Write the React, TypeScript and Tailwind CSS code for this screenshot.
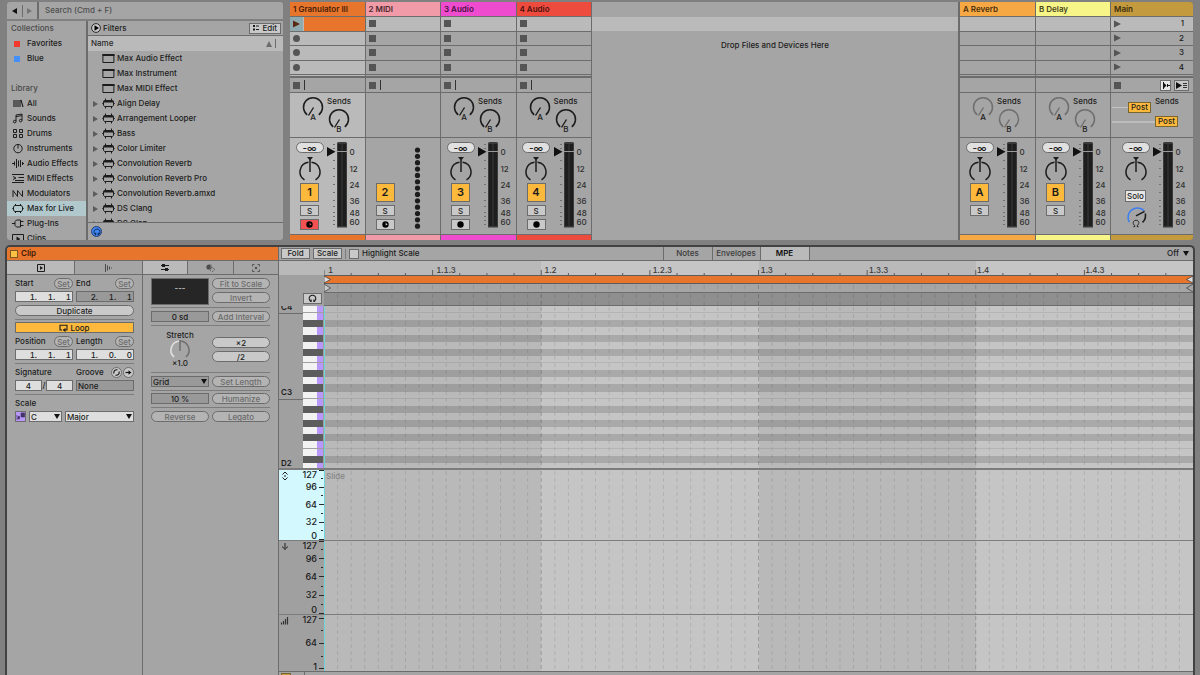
import React from "react";

type ChildrenProps = { children?: React.ReactNode };

const LINE = "border-[#6c6c6c]";

/* ---------- Browser ---------- */

function SideIcon({ name }: { name: string }) {
  const p = { fill: "none", stroke: "#1c1c1c", strokeWidth: 1 };
  return (
    <svg width="12" height="11" viewBox="0 0 12 11" className="shrink-0" aria-hidden="true">
      {name === "All" && <path {...p} strokeWidth={1.1} d="M2 2v7M4 2v7M6 2v7M8 2v7M9 2l2 7" />}
      {name === "Sounds" && (
        <g {...p}>
          <path d="M4 8.4V2l6-1v6.4M4 3.6l6-1" />
          <circle cx="2.7" cy="8.6" r="1.3" />
          <circle cx="8.7" cy="7.6" r="1.3" />
        </g>
      )}
      {name === "Drums" && <path {...p} d="M1.500 1.500h3v3h-3zM7.500 1.500h3v3h-3zM1.500 6.500h3v3h-3zM7.500 6.500h3v3h-3z" />}
      {name === "Instruments" && (
        <g {...p}>
          <circle cx="6" cy="5.6" r="4.2" />
          <path d="M6 1.4v4.2" />
        </g>
      )}
      {name === "Audio Effects" && <path {...p} d="M0 5.500h2M2.500 3.500v4M4.500 1v9M6.500 2.500v6M8.500 2v7M10.500 4v3M10.500 5.500H12" />}
      {name === "MIDI Effects" && <path {...p} d="M0 1.500h12M6.500 4.500H12M1 3.500l3 1.500-3 1.500M3 7.500h9M0 9.500h12" />}
      {name === "Modulators" && <path {...p} d="M1 9V2.500L5.500 8.500V2.500L10.500 8.500V2.500" />}
      {name === "Max for Live" && (
        <path {...p} d="M2.500 2.500h7l1 1.500v3l-1 1.500h-7l-1-1.500v-3zM3.500 1v1.500M8.500 1v1.500M3.500 8.500V10M8.500 8.500V10M.3 5.500h1.200M10.500 5.500h1.200" />
      )}
      {name === "Plug-Ins" && <path {...p} d="M0 5.500h3M3 3.500l1.500-1.500h4v7h-4L3 7.500zM8.500 3.500H11.500M8.500 7.500H11.500" />}
      {name === "Clips" && (
        <g>
          <path {...p} d="M.5 1.500h11v9H.5z" />
          <path d="M4.500 3.500v5l4-2.500z" fill="#1c1c1c" />
        </g>
      )}
    </svg>
  );
}

const libraryItems = [
  "All",
  "Sounds",
  "Drums",
  "Instruments",
  "Audio Effects",
  "MIDI Effects",
  "Modulators",
  "Max for Live",
  "Plug-Ins",
  "Clips",
];

const browserItems: { name: string; device: boolean }[] = [
  { name: "Max Audio Effect", device: false },
  { name: "Max Instrument", device: false },
  { name: "Max MIDI Effect", device: false },
  { name: "Align Delay", device: true },
  { name: "Arrangement Looper", device: true },
  { name: "Bass", device: true },
  { name: "Color Limiter", device: true },
  { name: "Convolution Reverb", device: true },
  { name: "Convolution Reverb Pro", device: true },
  { name: "Convolution Reverb.amxd", device: true },
  { name: "DS Clang", device: true },
  { name: "DS Clap", device: true },
];

function ItemIcon({ device }: { device: boolean }) {
  return (
    <svg width="13" height="11" viewBox="0 0 13 11" className="shrink-0" aria-hidden="true">
      {device ? (
        <g>
          <path d="M2.500 2.500h8l1 1.200v3.600l-1 1.200h-8l-1-1.200v-3.600zM3.500 .5v2M9.500 .5v2M3.500 8.500v2M9.500 8.500v2M.3 5.500h1.200M11.500 5.500h1.200" fill="none" stroke="#1c1c1c" />
          <path d="M1.500 2.500h10V4.500h-10z" fill="#1c1c1c" />
        </g>
      ) : (
        <g>
          <path d="M.9 1.500h11v8h-11z" fill="none" stroke="#1c1c1c" />
          <path d="M.5 1h12v2H.5z" fill="#1c1c1c" />
        </g>
      )}
    </svg>
  );
}

function HeadphoneIcon({ color, size }: { color: string; size: number }) {
  return (
    <svg width={size} height={size} viewBox="0 0 10 10" aria-hidden="true">
      <path d="M3.200 8.300A3.700 3.700 0 1 1 6.800 8.300" fill="none" stroke={color} strokeWidth="1.200" />
      <path d="M2.600 6h1.500v3H2.600zM5.900 6h1.500v3H5.900z" fill={color} />
    </svg>
  );
}

function Browser() {
  return (
    <section className="flex w-[276px] shrink-0 flex-col gap-[2px]">
      <div className="flex h-[17px] shrink-0 rounded-t-[3px] bg-[#a5a5a5]">
        <div className={`flex w-8 items-center border-r-2 ${LINE}`}>
          <button aria-label="Back" className={`flex h-3 flex-1 items-center justify-center border-r ${LINE}`}>
            <svg width="5" height="6" viewBox="0 0 5 6"><path d="M5 0v6L0 3z" fill="#111" /></svg>
          </button>
          <button aria-label="Forward" className="flex flex-1 items-center justify-center">
            <svg width="5" height="6" viewBox="0 0 5 6"><path d="M0 0v6l5-3z" fill="#767676" /></svg>
          </button>
        </div>
        <input
          aria-label="Search"
          placeholder="Search (Cmd + F)"
          className="min-w-0 flex-1 bg-transparent px-[6px] outline-none placeholder:text-[#4f4f4f]"
        />
      </div>
      <div className="flex min-h-0 flex-1 overflow-hidden rounded-b-[3px] bg-[#a5a5a5]">
        <nav className={`w-[81px] shrink-0 overflow-hidden border-r-2 ${LINE}`}>
          <h2 className="flex h-[15px] items-center pl-1 text-[#4a4a4a]">Collections</h2>
          <a href="#favorites" className="flex h-[15px] items-center gap-[7px] pl-[7px]">
            <span className="size-[6px] bg-[#f2372c]" />Favorites
          </a>
          <a href="#blue" className="flex h-[15px] items-center gap-[7px] pl-[7px]">
            <span className="size-[6px] bg-[#4590f8]" />Blue
          </a>
          <h2 className="mt-[15px] flex h-[15px] items-center pl-1 text-[#4a4a4a]">Library</h2>
          {libraryItems.map((n) => (
            <a
              key={n}
              href="#library"
              className={`flex h-[15px] items-center gap-[3px] pl-[5px] whitespace-nowrap ${n === "Max for Live" ? "bg-[#b1c8cc]" : ""}`}
            >
              <SideIcon name={n} />
              {n}
            </a>
          ))}
        </nav>
        <div className="flex min-w-0 flex-1 flex-col">
          <div className={`flex h-[15px] shrink-0 items-center border-b pr-[2px] pl-[3px] ${LINE}`}>
            <button className="flex items-center gap-[2px]">
              <svg width="10" height="10" viewBox="0 0 10 10" aria-hidden="true">
                <circle cx="5" cy="5" r="4.400" fill="#c9c9c9" stroke="#1c1c1c" strokeWidth=".9" />
                <path d="M3.500 2.200v5.600L8 5z" fill="#000" />
              </svg>
              Filters
            </button>
            <button className={`ml-auto flex h-[11px] items-center gap-[3px] border bg-[#c9c9c9] px-[3px] leading-none ${LINE}`}>
              <svg width="6" height="6" viewBox="0 0 6 6" aria-hidden="true">
                <path d="M0 0h2v2H0zM3 .5h3v1H3zM0 3.500h2v2H0zM3 4h3v1H3z" fill="#1c1c1c" />
              </svg>
              Edit
            </button>
          </div>
          <div className="flex h-[15px] shrink-0 items-center bg-[#bababa] pr-[7px] pl-[3px] text-[#2a2a2a]">
            Name
            <svg width="6" height="6" viewBox="0 0 6 6" className="ml-auto"><path d="M0 6h6L3 0z" fill="#6c6c6c" /></svg>
            <span className="ml-[3px] h-[9px] w-px bg-[#6c6c6c]" />
          </div>
          <ul className="min-h-0 flex-1 overflow-hidden">
            {browserItems.map((it) => (
              <li key={it.name} className="flex h-[15px] items-center pl-[5px] whitespace-nowrap">
                <svg width="5" height="6" viewBox="0 0 5 6" className="mr-[4px] shrink-0">
                  {it.device && <path d="M0 0v6l5-3z" fill="#5c5c5c" />}
                </svg>
                <ItemIcon device={it.device} />
                <span className="ml-[2px]">{it.name}</span>
              </li>
            ))}
          </ul>
          <div className={`flex h-[18px] shrink-0 items-center border-t pl-[3px] ${LINE}`}>
            <button aria-label="Preview" className="flex size-[11px] items-center justify-center rounded-full border border-[#2b3e66] bg-[#3d86f6]">
              <HeadphoneIcon color="#14284d" size={8} />
            </button>
          </div>
        </div>
      </div>
    </section>
  );
}

/* ---------- Session mixer ---------- */

type Kind = "clip" | "midi" | "audio" | "return" | "main";

type Track = {
  title: string;
  label: string;
  kind: Kind;
  head: string;
  text: string;
};

const tracks: Track[] = [
  { title: "1 Granulator III", label: "1", kind: "clip", head: "bg-[#e8752c]", text: "text-[#4a2108]" },
  { title: "2 MIDI", label: "2", kind: "midi", head: "bg-[#f29ba8]", text: "text-[#4c2a30]" },
  { title: "3 Audio", label: "3", kind: "audio", head: "bg-[#ee4bcf]", text: "text-[#4b1240]" },
  { title: "4 Audio", label: "4", kind: "audio", head: "bg-[#ee4b3f]", text: "text-[#4b120e]" },
];

const returns: Track[] = [
  { title: "A Reverb", label: "A", kind: "return", head: "bg-[#f6a845]", text: "text-[#4b300c]" },
  { title: "B Delay", label: "B", kind: "return", head: "bg-[#f7f488]", text: "text-[#474620]" },
];

const mainTrack: Track = { title: "Main", label: "", kind: "main", head: "bg-[#c49a3e]", text: "text-[#3e2f0c]" };

function SendKnob({ letter, dim }: { letter: string; dim: boolean }) {
  const c = dim ? "#6f6f6f" : "#1c1c1c";
  return (
    <svg width="24" height="26" viewBox="0 0 24 26" aria-hidden="true">
      <path d="M6.200 19.800A9.500 9.500 0 1 1 17.800 19.800" fill="none" stroke={c} strokeWidth="1.500" />
      <path d="M12.500 12.500L7.500 20.500" stroke={c} strokeWidth="1.400" />
      <text x="12" y="25" textAnchor="middle" fontSize="8" fontWeight="500" fill="#1c1c1c">{letter}</text>
    </svg>
  );
}

function Sends({ kind }: { kind: Kind }) {
  if (kind === "midi") return null;
  if (kind === "main") {
    return (
      <div className="flex flex-col gap-[3px] pt-[3px] pl-px">
        <div className="flex items-end">
          <span className="mb-[5px] h-px w-4 bg-[#c2c2c2]" />
          <button className="h-[11px] border border-[#7a6530] bg-[#fcb93b] px-[2px] leading-[9px]">Post</button>
          <span className="ml-1 self-start pb-[6px] leading-[11px]">Sends</span>
        </div>
        <div className="flex items-center">
          <span className="h-[2px] w-[43px] bg-[#bcbcbc]" />
          <button className="h-[11px] border border-[#7a6530] bg-[#fcb93b] px-[2px] leading-[9px]">Post</button>
        </div>
      </div>
    );
  }
  const dim = kind === "return";
  return (
    <div className="flex pl-[11px]">
      <div className="pt-[2px]"><SendKnob letter="A" dim={dim} /></div>
      <div className="flex flex-col pt-[3px] pl-[2px]">
        <span className="text-right leading-[11px]">Sends</span>
        <SendKnob letter="B" dim={dim} />
      </div>
    </div>
  );
}

function PanKnob() {
  return (
    <svg width="24" height="26" viewBox="0 0 24 26" aria-hidden="true">
      <path d="M9 0h6l-3 3.800z" fill="#1c1c1c" />
      <path d="M6.500 22.800A9.500 9.500 0 0 1 10.500 5.300M17.500 22.800A9.500 9.500 0 0 0 13.500 5.300" fill="none" stroke="#1c1c1c" strokeWidth="1.500" />
      <path d="M12 3v12" stroke="#1c1c1c" strokeWidth="1.500" />
    </svg>
  );
}

const meterMarks: [string, number][] = [
  ["0", 10],
  ["12", 27],
  ["24", 43],
  ["36", 59],
  ["48", 71],
  ["60", 80],
];

function Meter() {
  return (
    <svg width="35" height="88" viewBox="1 0 35 88" aria-hidden="true">
      {[2, 6, 18, 26, 34, 42, 50, 58, 64, 70, 74, 78, 82].map((y) => (
        <path key={y} d={`M7 ${y + 0.5}h2`} stroke="#707070" />
      ))}
      <path d="M11 1.500q0-1.500 1.500-1.500h7q1.500 0 1.500 1.500v84h-10z" fill="#3b3b3b" />
      <path d="M12 2h3.500v82H12zM16.500 2H20v82h-3.500z" fill="#1e1e1e" />
      <path d="M10.500 9.500h11" stroke="#9a9a9a" />
      <path d="M1 5l8.500 4.700L1 14.500z" fill="#111" />
      {meterMarks.map(([t, y]) => (
        <text key={t} x="23.500" y={y + 2.500} fontSize="8" fill="#303030">{t}</text>
      ))}
    </svg>
  );
}

function MidiDots() {
  return (
    <svg width="35" height="88" viewBox="0 0 35 88" aria-hidden="true">
      {Array.from({ length: 13 }, (_, i) => (
        <circle key={i} cx="14.500" cy={8 + i * 6.350} r="2.600" fill="#1c1c1c" />
      ))}
    </svg>
  );
}

function Strip({ t }: { t: Track }) {
  const midi = t.kind === "midi";
  const main = t.kind === "main";
  return (
    <div className={`flex pt-[4px] ${main ? "pl-[7px]" : "pl-[2px]"}`}>
      <div className="flex w-[35px] shrink-0 flex-col items-center">
        <div className="flex h-[41px] flex-col items-center gap-[4px]">
          {!midi && (
            <>
              <button aria-label="Volume" className={`flex h-[11px] w-[28px] items-center justify-center rounded-full border bg-[#e0e0e0] text-[10px] leading-none ${LINE}`}>
                -∞
              </button>
              <PanKnob />
            </>
          )}
        </div>
        {main ? (
          <div className="mt-[7px] flex flex-col items-center gap-[2px]">
            <button className={`h-[12px] border bg-[#e6e6e6] px-px leading-[10px] ${LINE}`}>Solo</button>
            <svg width="24" height="26" viewBox="0 0 24 26" aria-hidden="true">
              <path d="M5.300 18.200A9.500 9.500 0 0 1 20.200 6.700" fill="none" stroke="#3d7ff0" strokeWidth="1.600" />
              <path d="M21.300 9.500A9.500 9.500 0 0 1 18.500 18.400" fill="none" stroke="#1c1c1c" strokeWidth="1.600" />
              <path d="M12 11.800L20.600 7.300" stroke="#1c1c1c" strokeWidth="1.500" />
              <path d="M9.300 22.700h1.500v-1.200A2.800 2.800 0 1 1 13.200 21.500v1.200h1.500" fill="none" stroke="#1c1c1c" strokeWidth=".9" />
            </svg>
          </div>
        ) : (
          <div className="flex flex-col gap-[3px]">
            <button className={`flex h-[19px] w-[19px] items-center justify-center border bg-[#fcb93b] text-[11px] font-semibold ${LINE}`}>
              {t.label}
            </button>
            <button className={`flex h-[11px] w-[19px] items-center justify-center border bg-[#c9c9c9] leading-none ${LINE}`}>S</button>
            {t.kind !== "return" && (
              <button
                aria-label="Arm"
                className={`flex h-[11px] w-[19px] items-center justify-center border ${LINE} ${t.kind === "clip" ? "bg-[#f25252]" : "bg-[#c9c9c9]"}`}
              >
                <svg width="7" height="7" viewBox="0 0 7 7">
                  <circle cx="3.500" cy="3.500" r="3.200" fill="#000" />
                  {t.kind === "clip" && <path d="M3.700 1.200Q4 2.700 5.700 3.200L3.700 4.500z" fill="#f25252" />}
                  {t.kind === "midi" && <path d="M3.700 1.200Q4 2.700 5.700 3.200L3.700 4.500z" fill="#e0e0e0" />}
                </svg>
              </button>
            )}
          </div>
        )}
      </div>
      {midi ? <MidiDots /> : <Meter />}
    </div>
  );
}

function Slot({ t, index }: { t: Track; index: number }) {
  const lit = index === 0 || t.kind === "clip";
  const bg = lit ? "bg-[#bababa]" : "bg-[#a5a5a5]";
  if (t.kind === "clip" && index === 0) {
    return (
      <div className="flex bg-[#e8752c]">
        <button aria-label="Launch clip" className="flex w-[14px] items-center border-r border-[#bababa] bg-[#8fabb0] pl-[3px]">
          <svg width="7" height="8" viewBox="0 0 7 8"><path d="M0 .5v7L7 4z" fill="#5b2a12" /></svg>
        </button>
      </div>
    );
  }
  return (
    <div className={`flex items-center pl-[3px] ${bg}`}>
      {t.kind === "clip" && <span className="size-[7px] rounded-full bg-[#555]" />}
      {(t.kind === "midi" || t.kind === "audio") && <span className="size-[7px] bg-[#555]" />}
      {t.kind === "main" && (
        <>
          <svg width="7" height="8" viewBox="0 0 7 8"><path d="M0 .5v7L7 4z" fill="#555" /></svg>
          <span className="ml-auto pr-[9px]">{index + 1}</span>
        </>
      )}
    </div>
  );
}

function TrackColumn({ t }: { t: Track }) {
  const body = t.kind === "clip" ? "bg-[#bababa]" : "bg-[#a5a5a5]";
  const round = t.kind === "main";
  return (
    <div className="flex min-w-0 flex-col overflow-hidden">
      <h3 className={`flex h-[14px] items-center pl-[3px] font-semibold whitespace-nowrap ${t.head} ${t.text} ${round ? "rounded-tr-[3px]" : ""}`}>
        {t.title}
      </h3>
      <div className="mt-px grid h-[57px] grid-rows-4 gap-px">
        {[0, 1, 2, 3].map((i) => (
          <Slot key={i} t={t} index={i} />
        ))}
      </div>
      <div className={`mt-px h-px ${body}`} />
      <div className="mt-[2px] flex h-[14px] items-center bg-[#a5a5a5] pl-[3px]">
        {t.kind !== "return" && <button aria-label="Stop" className="size-[7px] bg-[#555]" />}
        {(t.kind === "clip" || t.kind === "midi" || t.kind === "audio") && <span className="ml-[4px] h-[10px] w-px bg-[#333]" />}
        {t.kind === "main" && (
          <div className="mr-[4px] ml-auto flex gap-[3px]">
            <button aria-label="Back to arrangement" className={`flex h-[11px] w-[11px] items-center justify-center border bg-[#e6e6e6] ${LINE}`}>
              <svg width="8" height="7" viewBox="0 0 8 7"><path d="M1.500 0v7M5.500 2v3M5.500 3.500h2.500" stroke="#111" fill="none" /><path d="M2 1l2.500 2.500L2 6z" fill="#111" /></svg>
            </button>
            <button aria-label="Follow actions" className={`flex h-[11px] w-[15px] items-center justify-center border bg-[#c9c9c9] ${LINE}`}>
              <svg width="12" height="7" viewBox="0 0 12 7"><path d="M0 0v7l6-3.500z" fill="#111" /><path d="M7 1.500h4M7 3.500h4M7 5.500h4" stroke="#333" /></svg>
            </button>
          </div>
        )}
      </div>
      <div className={`mt-px h-[44px] ${body}`}><Sends kind={t.kind} /></div>
      <div className={`mt-px min-h-0 flex-1 overflow-hidden ${body}`}><Strip t={t} /></div>
      <div className={`mt-px h-[5px] shrink-0 ${t.head} ${round ? "rounded-br-[3px]" : ""}`} />
    </div>
  );
}

function Session() {
  return (
    <section className="flex min-w-0 flex-1">
      <div className="grid w-[301px] shrink-0 grid-cols-4 gap-px bg-[#6c6c6c]">
        {tracks.map((t) => <TrackColumn key={t.title} t={t} />)}
      </div>
      <div className={`flex min-w-0 flex-1 flex-col border-x bg-[#a5a5a5] ${LINE}`}>
        <div className="mt-[15px] h-[14px] bg-[#bababa]" />
        <p className="pt-[8px] text-center leading-[13px]">Drop Files and Devices Here</p>
      </div>
      <div className="grid w-[234px] shrink-0 grid-cols-[75px_74px_1fr] gap-px rounded-r-[3px] bg-[#6c6c6c] pl-px">
        {[...returns, mainTrack].map((t) => <TrackColumn key={t.title} t={t} />)}
      </div>
    </section>
  );
}

/* ---------- Clip panel ---------- */

function Pill({ children, dim }: ChildrenProps & { dim?: boolean }) {
  return (
    <button className={`flex h-[11px] w-full items-center justify-center rounded-full border leading-none whitespace-nowrap ${LINE} ${dim ? "bg-[#b4b4b4] text-[#6b6b6b]" : "bg-[#c9c9c9]"}`}>
      {children}
    </button>
  );
}

function Labelled({ id, children }: ChildrenProps & { id: string }) {
  return (
    <div className="flex items-center justify-between">
      <label htmlFor={id}>{children}</label>
      <div className="w-[19px]"><Pill dim>Set</Pill></div>
    </div>
  );
}

function Field({ id, value, dark, center, label }: { id: string; value: string; dark?: boolean; center?: boolean; label?: string }) {
  return (
    <input
      id={id}
      aria-label={label}
      defaultValue={value}
      className={`h-[11px] w-full min-w-0 border px-px leading-none outline-none ${LINE} ${dark ? "bg-[#999]" : "bg-[#dedede]"} ${center ? "text-center" : "text-right tabular-nums"}`}
    />
  );
}

function Drop({ label, options, dark }: { label: string; options: string[]; dark?: boolean }) {
  return (
    <div className="relative w-full">
      <select aria-label={label} className={`block h-[11px] w-full appearance-none border px-px leading-none ${LINE} ${dark ? "bg-[#999]" : "bg-[#dedede]"}`}>
        {options.map((o) => <option key={o}>{o}</option>)}
      </select>
      <svg width="6" height="5" viewBox="0 0 6 5" className="pointer-events-none absolute top-[3px] right-[2px]">
        <path d="M0 0h6L3 5z" fill="#111" />
      </svg>
    </div>
  );
}

function Rule() {
  return <div className="h-px bg-[#7c7c7c]" />;
}

function ClipTabs() {
  const s = { fill: "none", stroke: "#1c1c1c" };
  return (
    <div className={`flex h-[14px] shrink-0 border-b ${LINE}`}>
      <button aria-label="Clip" className={`flex w-[68px] items-center justify-center border-r bg-[#bababa] ${LINE}`}>
        <svg width="8" height="8" viewBox="0 0 8 8"><path {...s} d="M.5 .5h7v7h-7z" /><path d="M3 2v4l3-2z" fill="#1c1c1c" /></svg>
      </button>
      <button aria-label="Launch" className={`flex w-[68px] items-center justify-center border-r ${LINE}`}>
        <svg width="8" height="8" viewBox="0 0 8 8"><path d="M.5 0v8M2.500 1.500v5M4.500 2.500v3M6.500 3.500v1" stroke="#4c4c4c" /></svg>
      </button>
      <button aria-label="Notes" className={`flex flex-1 items-center justify-center border-r bg-[#bababa] ${LINE}`}>
        <svg width="8" height="7" viewBox="0 0 8 7"><path d="M0 1.500h8M0 5.500h8" stroke="#1c1c1c" /><path d="M1 0h3v3H1zM4 4h3v3H4z" fill="#1c1c1c" /></svg>
      </button>
      <button aria-label="Transform" className={`flex flex-1 items-center justify-center border-r ${LINE}`}>
        <svg width="9" height="8" viewBox="0 0 9 8"><circle cx="3" cy="3" r="2.600" fill="#4c4c4c" /><path d="M5 0v5" stroke="#808080" /><circle cx="6.200" cy="5.500" r="2" fill="none" stroke="#4c4c4c" strokeDasharray="1 1" /></svg>
      </button>
      <button aria-label="Generate" className="flex flex-1 items-center justify-center">
        <svg width="8" height="8" viewBox="0 0 8 8"><path d="M.5 2.500v-2h2M5.500 .5h2v2M7.500 5.500v2h-2M2.500 7.500h-2v-2" fill="none" stroke="#555" /><circle cx="4" cy="4" r="1.300" fill="#555" /></svg>
      </button>
    </div>
  );
}

function ClipPanel() {
  return (
    <aside className={`flex w-[272px] shrink-0 flex-col border-r ${LINE}`}>
      <h2 className={`flex h-[14px] shrink-0 items-center gap-[3px] rounded-tl-[3px] border-b bg-[#e8752c] pl-[3px] font-semibold text-[#3c1b06] ${LINE}`}>
        <span className="size-[8px] border border-[#7a5a20] bg-[#fcc044]" />
        Clip
      </h2>
      <ClipTabs />
      <div className="flex min-h-0 flex-1">
        <div className={`flex w-[136px] shrink-0 flex-col border-r pt-[3px] pr-2 pl-2 ${LINE}`}>
          <div className="grid grid-cols-2 gap-x-[3px] gap-y-[2px]">
            <Labelled id="start">Start</Labelled>
            <Labelled id="end">End</Labelled>
            <Field id="start" value="1.     1.     1" />
            <Field id="end" value="2.     1.     1" dark />
          </div>
          <div className="mt-[3px] mb-[3px]"><Pill>Duplicate</Pill></div>
          <Rule />
          <button className={`mt-[2px] flex h-[11px] items-center justify-center gap-[2px] border bg-[#fcb93b] leading-none ${LINE}`}>
            <svg width="9" height="8" viewBox="0 0 9 8" aria-hidden="true">
              <path d="M3 6H1V1.200h7V6H6" fill="none" stroke="#1c1c1c" strokeWidth="1.100" />
              <path d="M6.500 4v4L3.500 6z" fill="#1c1c1c" />
            </svg>
            Loop
          </button>
          <div className="mt-[3px] mb-[3px] grid grid-cols-2 gap-x-[3px] gap-y-[2px]">
            <Labelled id="position">Position</Labelled>
            <Labelled id="length">Length</Labelled>
            <Field id="position" value="1.     1.     1" />
            <Field id="length" value="1.     0.     0" />
          </div>
          <Rule />
          <div className="mt-[3px] mb-[3px] grid grid-cols-2 gap-x-[3px] gap-y-[2px]">
            <span>Signature</span>
            <div className="flex items-center gap-px">
              <label htmlFor="groove" className="mr-auto">Groove</label>
              <button aria-label="Hot-swap groove" className={`flex size-[11px] items-center justify-center rounded-full border bg-[#c9c9c9] ${LINE}`}>
                <svg width="7" height="7" viewBox="0 0 7 7"><path d="M1 4.500A2.700 2.700 0 0 1 4.500 1M6 2.500A2.700 2.700 0 0 1 2.500 6" fill="none" stroke="#111" strokeWidth="1.100" /></svg>
              </button>
              <button aria-label="Commit groove" className={`flex size-[11px] items-center justify-center rounded-full border bg-[#c9c9c9] ${LINE}`}>
                <svg width="7" height="7" viewBox="0 0 7 7"><path d="M.5 3.500h4" stroke="#111" strokeWidth="1.200" /><path d="M3.500 1.300v4.400l3-2.200z" fill="#111" /></svg>
              </button>
            </div>
            <div className="flex items-center gap-px">
              <Field id="num" label="Numerator" value="4" center />/
              <Field id="den" label="Denominator" value="4" center />
            </div>
            <input id="groove" defaultValue="None" className={`h-[11px] w-full border bg-[#999] px-px leading-none outline-none ${LINE}`} />
          </div>
          <Rule />
          <span className="mt-[3px]">Scale</span>
          <div className="mt-[2px] flex gap-[3px]">
            <button aria-label="Scale mode" className={`flex size-[11px] shrink-0 items-center justify-center border bg-[#b898fb] ${LINE}`}>
              <svg width="9" height="9" viewBox="0 0 9 9"><path d="M1 3v5M2 4.500h1.500V7H2zM5 1h3.500v4H5z" fill="#453569" stroke="#453569" strokeWidth=".7" /></svg>
            </button>
            <div className="w-[33px] shrink-0"><Drop label="Root note" options={["C", "D", "E"]} /></div>
            <Drop label="Scale name" options={["Major", "Minor"]} />
          </div>
        </div>
        <div className="flex min-w-0 flex-1 flex-col pt-[3px] pr-2 pl-2">
          <div className="grid grid-cols-2 gap-x-[3px]">
            <div className={`flex h-[27px] items-center justify-center border bg-[#262626] pb-[6px] text-[#d0d0d0] ${LINE}`}>---</div>
            <div className="flex flex-col gap-[3px]"><Pill dim>Fit to Scale</Pill><Pill dim>Invert</Pill></div>
          </div>
          <div className="mt-[2px] mb-[3px]"><Rule /></div>
          <div className="grid grid-cols-2 gap-x-[3px]">
            <Field id="interval" label="Interval" value="0 sd" dark center />
            <Pill dim>Add Interval</Pill>
          </div>
          <div className="mt-[3px] mb-[4px]"><Rule /></div>
          <div className="grid grid-cols-2 items-center gap-x-[3px]">
            <div className="flex flex-col items-center">
              Stretch
              <svg width="22" height="17" viewBox="0 0 22 17" aria-hidden="true" className="overflow-visible">
                <path d="M5 16A9.200 9.200 0 0 1 11 0" fill="none" stroke="#dedede" strokeWidth="1.700" />
                <path d="M11 0A9.200 9.200 0 0 1 17 16" fill="none" stroke="#6f6f6f" strokeWidth="1.500" />
                <path d="M11 -1v11" stroke="#6f6f6f" strokeWidth="1.500" />
              </svg>
              ×1.0
            </div>
            <div className="flex flex-col gap-[3px]"><Pill>×2</Pill><Pill>/2</Pill></div>
          </div>
          <div className="mt-[3px] mb-[3px]"><Rule /></div>
          <div className="grid grid-cols-2 gap-x-[3px]">
            <Drop label="Stretch grid" options={["Grid"]} dark />
            <Pill dim>Set Length</Pill>
          </div>
          <div className="mt-[3px] mb-[2px]"><Rule /></div>
          <div className="grid grid-cols-2 gap-x-[3px]">
            <Field id="humanize" label="Humanize amount" value="10 %" dark center />
            <Pill dim>Humanize</Pill>
          </div>
          <div className="mt-[3px] mb-[3px]"><Rule /></div>
          <div className="grid grid-cols-2 gap-x-[3px]"><Pill dim>Reverse</Pill><Pill dim>Legato</Pill></div>
        </div>
      </div>
    </aside>
  );
}

/* ---------- Note editor ---------- */

const keyNames = ["C", "B", "A#", "A", "G#", "G", "F#", "F", "E", "D#", "D", "C#"];
const keys = Array.from({ length: 23 }, (_, i) => keyNames[i % 12]);

function BeatShade() {
  return (
    <div className="absolute inset-0 grid grid-cols-4">
      <div className="bg-[#b9b9b9]" />
      <div className="bg-[#c5c5c5]" />
      <div className="bg-[#b9b9b9]" />
      <div className="bg-[#c5c5c5]" />
    </div>
  );
}

function GridLines() {
  return (
    <svg width="100%" height="100%" className="pointer-events-none absolute inset-0" aria-hidden="true">
      {Array.from({ length: 63 }, (_, i) => {
        const x = `${((i + 1) * 100) / 64}%`;
        return (
          <line key={i} x1={x} x2={x} y1="1" y2="100%" stroke="#000" strokeOpacity={(i + 1) % 16 === 0 ? 0.2 : 0.1} strokeDasharray="4 3" />
        );
      })}
    </svg>
  );
}

function Row({ left, children, size, leftBg }: ChildrenProps & { left?: React.ReactNode; size: string; leftBg: string }) {
  return (
    <div className={`flex shrink-0 ${size}`}>
      <div className={`w-[45px] shrink-0 overflow-hidden ${leftBg}`}>{left}</div>
      <div className="relative min-w-0 flex-1 overflow-hidden">{children}</div>
    </div>
  );
}

type AxisMark = [string, number, number];

function Lane({ marks, minor, size, height, active, icon, title }: {
  marks: AxisMark[];
  minor: number[];
  size: string;
  height: number;
  active?: boolean;
  icon: React.ReactNode;
  title?: string;
}) {
  return (
    <Row
      size={size}
      leftBg={active ? "bg-[#d3f8fe]" : "bg-[#a0a0a0]"}
      left={
        <svg width="45" height={height} viewBox={`0 0 45 ${height}`}>
          {icon}
          {marks.map(([t, ty, y]) => (
            <g key={t}>
              <text x="38" y={ty + 3} textAnchor="end" fontSize="9" fontWeight="500" fill="#1c1c1c">{t}</text>
              <path d={`M40 ${y}h5`} stroke="#2a2a2a" />
            </g>
          ))}
          {minor.map((y) => <path key={y} d={`M42 ${y}h2`} stroke="#2a2a2a" />)}
        </svg>
      }
    >
      <BeatShade />
      <GridLines />
      <div className="absolute inset-y-0 left-0 w-px bg-[#6fd3da]" />
      {title && <span className="relative block pl-[2px] leading-[12px] text-[#858585]">{title}</span>}
    </Row>
  );
}

function Editor() {
  return (
    <main className="flex min-w-0 flex-1 flex-col">
      <div className={`grid h-[14px] shrink-0 grid-cols-[1fr_auto_1fr] border-b ${LINE}`}>
        <div className="flex items-center pl-[2px]">
          <button className={`h-[11px] w-[29px] border bg-[#c9c9c9] leading-[9px] ${LINE}`}>Fold</button>
          <button className={`ml-[3px] h-[11px] w-[29px] border bg-[#c9c9c9] leading-[9px] ${LINE}`}>Scale</button>
          <span className="mx-[3px] h-[10px] w-px bg-[#7c7c7c]" />
          <label className="flex items-center gap-[3px]">
            <input type="checkbox" className={`size-[10px] appearance-none border bg-[#c9c9c9] ${LINE}`} />
            Highlight Scale
          </label>
        </div>
        <div className={`flex border-l text-[#3a3a3a] ${LINE}`}>
          <button className={`w-[49px] border-r ${LINE}`}>Notes</button>
          <button className={`w-[48px] border-r ${LINE}`}>Envelopes</button>
          <button className={`w-[49px] border-r bg-[#bababa] font-semibold text-[#111] ${LINE}`}>MPE</button>
        </div>
        <button className="flex items-center justify-end gap-[4px] pr-[4px]">
          Off
          <svg width="6" height="5" viewBox="0 0 6 5" aria-hidden="true"><path d="M0 0h6L3 5z" fill="#111" /></svg>
        </button>
      </div>

      <Row size="h-[14px]" leftBg="bg-[#b9b9b9]">
        <BeatShade />
        <svg width="100%" height="14" className="absolute inset-0" aria-hidden="true">
          {Array.from({ length: 32 }, (_, i) => {
            const x = `${(i * 100) / 32}%`;
            return (
              <g key={i} stroke="#5c5c5c">
                <line x1={x} x2={x} y1={i % 4 === 0 ? 9 : 12} y2="14" />
                {i % 4 === 0 && <line x1={x} x2={x} y1="9.500" y2="9.500" strokeWidth="3" />}
              </g>
            );
          })}
        </svg>
        <div className="relative grid grid-cols-8 pt-[3px] pl-[4px] leading-[12px] text-[#3a3a3a] tabular-nums">
          {["1", "1.1.3", "1.2", "1.2.3", "1.3", "1.3.3", "1.4", "1.4.3"].map((l) => <span key={l}>{l}</span>)}
        </div>
      </Row>

      <div className="flex h-[31px] shrink-0">
        <div className="flex w-[45px] shrink-0 items-end justify-end bg-[#a0a0a0] pr-[2px] pb-[2px]">
          <button aria-label="Preview notes" className={`flex h-[11px] w-[19px] items-center justify-center border bg-[#c9c9c9] ${LINE}`}>
            <HeadphoneIcon color="#1c1c1c" size={9} />
          </button>
        </div>
        <div className="flex min-w-0 flex-1 flex-col">
          <div className="flex h-[9px] justify-between border-y border-[#5c5c5c] bg-[#e8752c]">
            <svg width="7" height="7" viewBox="0 0 7 7"><path d="M0 0l6.500 3.500L0 7z" fill="#dedede" stroke="#333" strokeWidth=".7" /></svg>
            <svg width="7" height="7" viewBox="0 0 7 7"><path d="M7 0L.5 3.500 7 7z" fill="#dedede" stroke="#333" strokeWidth=".7" /></svg>
          </div>
          <div className="relative flex h-[8px] items-center justify-between bg-[#a5a5a5]">
            <GridLines />
            <svg width="7" height="8" viewBox="0 0 7 8"><path d="M0 0l6.500 4L0 8z" fill="#c9c9c9" stroke="#444" strokeWidth=".8" /></svg>
            <svg width="7" height="8" viewBox="0 0 7 8"><path d="M7 0L.5 4 7 8" fill="none" stroke="#444" strokeWidth=".8" /></svg>
          </div>
          <div className={`relative flex-1 border-y bg-[#8f8f8f] ${LINE}`}><GridLines /></div>
        </div>
      </div>

      <Row
        size="h-[162px]"
        leftBg="bg-[#a0a0a0]"
        left={
          <div className="flex h-full pr-px">
            <div className="flex flex-1 flex-col font-semibold">
              <div className={`flex h-[8px] shrink-0 items-end overflow-hidden border-b pl-[2px] leading-[12px] ${LINE}`}>C4</div>
              <div className={`flex h-[86px] shrink-0 items-end border-b pl-[2px] leading-[13px] ${LINE}`}>C3</div>
              <div className="flex flex-1 items-end pl-[2px] leading-[10px]">D2</div>
            </div>
            <div className="grid h-[164px] w-[20px] shrink-0 grid-rows-[repeat(23,1fr)]">
              {keys.map((k, i) =>
                k.endsWith("#") ? (
                  <div key={i} className="bg-[#5c5c5c]" />
                ) : (
                  <div key={i} className={`flex bg-[#f2f2f2] ${k === "F" || k === "C" ? "border-b border-[#a0a0a0]" : ""}`}>
                    <div className="ml-auto w-[6px] bg-[#b898fb]" />
                  </div>
                ),
              )}
            </div>
          </div>
        }
      >
        <BeatShade />
        <div className="absolute inset-x-0 top-0 grid h-[164px] grid-rows-[repeat(23,1fr)]">
          {keys.map((k, i) => (
            <div key={i} className={k.endsWith("#") ? "bg-black/14" : k === "F" || k === "C" ? "border-b border-black/8" : ""} />
          ))}
        </div>
        <GridLines />
        <div className="absolute inset-y-0 left-0 w-px bg-[#6fd3da]" />
      </Row>

      <div className="h-[2px] shrink-0 bg-[#7c7c7c]" />
      <Lane
        size="h-[70px]"
        height={70}
        active
        title="Slide"
        marks={[["127", 5, 0.5], ["96", 17, 17.5], ["64", 35, 34.5], ["32", 52, 52.5], ["0", 66, 69.5]]}
        minor={[8.5, 25.5, 43.5, 60.5]}
        icon={<path d="M3.500 4.500L6 2 8.500 4.500M3.500 7.500L6 10 8.500 7.500M6 5v2" fill="none" stroke="#1c1c1c" />}
      />
      <div className="h-px shrink-0 bg-[#7c7c7c]" />
      <Lane
        size="h-[73px]"
        height={73}
        marks={[["127", 5, 0.5], ["96", 18, 17.5], ["64", 36, 35.5], ["32", 54, 54.5], ["0", 69, 72.5]]}
        minor={[8.5, 26.5, 45.5, 63.5]}
        icon={<path d="M6 2v5.500M3.500 5.500Q4 7 6 8.500 8 7 8.500 5.500" fill="none" stroke="#1c1c1c" />}
      />
      <div className="h-px shrink-0 bg-[#7c7c7c]" />
      <Lane
        size="h-[56px]"
        height={56}
        marks={[["127", 5, 3.5], ["64", 28, 28.5], ["1", 52, 53.5]]}
        minor={[15.5, 41.5]}
        icon={<path d="M2.500 7.500v2M4.500 6v3.500M6.500 4v5.500M8.500 2v7.500" stroke="#333" strokeWidth="1.200" />}
      />
      <div className={`flex flex-1 border-t ${LINE}`}>
        <div className={`w-[26px] border-r pt-px pl-[2px] ${LINE}`}>
          <div className="h-[10px] w-[10px] border border-[#7a6530] bg-[#c49a3e]" />
        </div>
      </div>
    </main>
  );
}

export default function App() {
  return (
    <div className="flex h-screen flex-col overflow-hidden bg-[#808080] font-['Inter','Liberation_Sans',sans-serif] text-[8px] leading-[11px] font-medium text-[#1c1c1c]">
      <div className="flex h-[240px] shrink-0 gap-[7px] pt-[2px] pr-[7px] pl-[7px]">
        <Browser />
        <Session />
      </div>
      <div className="mx-[5px] mt-[5px] flex min-h-0 flex-1 overflow-hidden rounded-t-[5px] border-x-2 border-t-2 border-[#424242] bg-[#a5a5a5]">
        <ClipPanel />
        <Editor />
      </div>
    </div>
  );
}
